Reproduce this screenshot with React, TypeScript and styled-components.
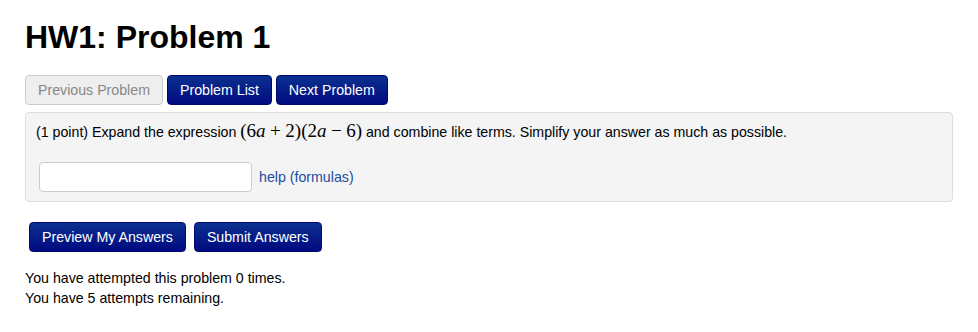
import styled, { createGlobalStyle, css } from 'styled-components';

const GlobalStyle = createGlobalStyle`
  body {
    margin: 0;
    background: #fff;
    font-family: 'Liberation Sans', Arial, sans-serif;
    color: #000;
  }
`;

export default function App() {
  return (
    <>
      <GlobalStyle />
      <Page>
        <Title>HW1: Problem 1</Title>
        <NavRow>
          <Button disabled $variant='disabled'>
            Previous Problem
          </Button>
          <Button>Problem List</Button>
          <Button>Next Problem</Button>
        </NavRow>
        <ProblemPanel>
          <Statement>
            (1 point) Expand the expression{' '}
            <MathExpr>
              (6<Var>a</Var>
              <Op>+</Op>2)(2<Var>a</Var>
              <Op>−</Op>6)
            </MathExpr>{' '}
            and combine like terms. Simplify your answer as much as possible.
          </Statement>
          <AnswerRow>
            <AnswerInput type='text' />
            <HelpLink href='#'>help (formulas)</HelpLink>
          </AnswerRow>
        </ProblemPanel>
        <SubmitRow>
          <Button>Preview My Answers</Button>
          <Button>Submit Answers</Button>
        </SubmitRow>
        <Attempts>
          <div>You have attempted this problem 0 times.</div>
          <div>You have 5 attempts remaining.</div>
        </Attempts>
      </Page>
    </>
  );
}

const Page = styled.div`
  padding: 0 25px;
`;

const Title = styled.h1`
  margin: 0;
  padding-top: 18px;
  font-size: 32px;
  line-height: 38px;
  font-weight: 700;
`;

const NavRow = styled.div`
  display: flex;
  gap: 4px;
  margin-top: 19px;
`;

const Button = styled.button<{ $variant?: 'primary' | 'disabled' }>`
  font-family: 'Liberation Sans', Arial, sans-serif;
  font-size: 14.2px;
  line-height: 20px;
  height: 30px;
  padding: 4px 12px;
  border-radius: 4px;
  border: 1px solid #000a6e;
  color: #fff;
  background: linear-gradient(#0b3190, #000a80);
  cursor: pointer;

  ${({ $variant }) =>
    $variant === 'disabled' &&
    css`
      color: #888;
      background: #eee;
      border-color: #ccc;
      cursor: default;
    `}
`;

const ProblemPanel = styled.div`
  margin-top: 7px;
  background: #f4f4f4;
  border: 1px solid #ddd;
  border-radius: 4px;
  padding: 7px 10px 9px 10px;
`;

const Statement = styled.div`
  font-size: 14.2px;
  line-height: 22px;
`;

const MathExpr = styled.span`
  font-family: 'Liberation Serif', 'Times New Roman', serif;
  font-size: 19px;
`;

const Var = styled.i`
  font-style: italic;
`;

const Op = styled.span`
  margin: 0 4.5px;
`;

const AnswerRow = styled.div`
  display: flex;
  align-items: center;
  gap: 7px;
  margin-top: 19px;
  padding-left: 3px;
`;

const AnswerInput = styled.input`
  width: 213px;
  height: 30px;
  box-sizing: border-box;
  border: 1px solid #ccc;
  border-radius: 4px;
  background: #fff;
  padding: 4px 6px;
  font-size: 14px;
`;

const HelpLink = styled.a`
  font-size: 14.2px;
  color: #1c4ba0;
  text-decoration: none;
`;

const SubmitRow = styled.div`
  display: flex;
  gap: 8px;
  margin-top: 20px;
  padding-left: 4px;
`;

const Attempts = styled.div`
  margin-top: 16px;
  font-size: 14.2px;
  line-height: 20px;
`;
